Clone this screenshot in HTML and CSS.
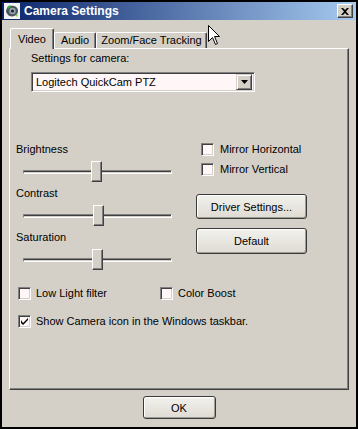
FILE: index.html
```html
<!DOCTYPE html>
<html>
  <head>
    <meta name="viewport" content="width=device-width, initial-scale=1" />
    <link rel="stylesheet" href="styles.css">
  </head>
  <body>
    <div class="window">
      <div class="titlebar">
        <svg class="app-icon" width="16" height="16" viewBox="0 0 16 16">
          <rect x="0" y="0" width="16" height="16" fill="#f4f4f4"/>
          <path d="M2 9 C2 4 6 2 10 3 C14 4 15 8 13 11 C11 14 6 14 4 12 Z" fill="#4a5560"/>
          <circle cx="8.5" cy="8" r="3.2" fill="#9aa4ac"/>
          <circle cx="8.5" cy="8" r="1.6" fill="#1e262c"/>
          <path d="M3 4 L6 2 L7 4 L4 6 Z" fill="#3cae3c"/>
          <path d="M11 12 L14 11 L13 14 Z" fill="#7cc85a"/>
        </svg>
        <span class="title">Camera Settings</span>
        <span class="close-btn">
          <svg width="8" height="7" viewBox="0 0 8 7">
            <path d="M0 0 H2 L4 2 L6 0 H8 L5 3.5 L8 7 H6 L4 5 L2 7 H0 L3 3.5 Z" fill="#000"/>
          </svg>
        </span>
      </div>

      <div class="content">
        <div class="tabs">
          <div class="tab tab-video active">Video</div>
          <div class="tab tab-audio">Audio</div>
          <div class="tab tab-zoom">Zoom/Face Tracking</div>
        </div>

        <div class="panel">
          <div class="camera">
            <div class="camera-label">Settings for camera:</div>
            <div class="combo">
              <span class="combo-text">Logitech QuickCam PTZ</span>
              <span class="combo-btn">
                <svg width="7" height="4" viewBox="0 0 7 4"><path d="M0 0 H7 L3.5 4 Z" fill="#000"/></svg>
              </span>
            </div>
          </div>

          <div class="controls">
            <div class="sliders">
              <div class="slider-label">Brightness</div>
              <div class="slider">
                <div class="track"></div>
                <div class="thumb" style="left: 75px"></div>
              </div>
              <div class="slider-label">Contrast</div>
              <div class="slider">
                <div class="track"></div>
                <div class="thumb" style="left: 77px"></div>
              </div>
              <div class="slider-label">Saturation</div>
              <div class="slider">
                <div class="track"></div>
                <div class="thumb" style="left: 76px"></div>
              </div>
            </div>

            <div class="options">
              <label class="check"><span class="box"></span>Mirror Horizontal</label>
              <label class="check check-second"><span class="box"></span>Mirror Vertical</label>
              <button class="btn btn-driver" type="button">Driver Settings...</button>
              <button class="btn btn-default" type="button">Default</button>
            </div>
          </div>

          <div class="bottom">
            <div class="bottom-row">
              <label class="check check-low"><span class="box"></span>Low Light filter</label>
              <label class="check"><span class="box"></span>Color Boost</label>
            </div>
            <label class="check check-taskbar">
              <span class="box">
                <svg width="7" height="7" viewBox="0 0 7 7"><path d="M0 2 L0 5 L2 7 L7 2 L7 0 L2 5 Z" fill="#000"/></svg>
              </span>Show Camera icon in the Windows taskbar.
            </label>
          </div>
        </div>

        <div class="footer">
          <button class="btn btn-ok" type="button">OK</button>
        </div>
      </div>

      <!-- mouse pointer caught in the screenshot -->
      <svg class="cursor" width="12" height="20" viewBox="0 0 12 20">
        <path d="M0.5 0.5 V16.5 L4.5 12.5 L7.5 19.5 L9.5 18.5 L6.5 11.5 H11.5 Z" fill="#fff" stroke="#000" stroke-width="1"/>
      </svg>
    </div>
  </body>
</html>
```

FILE: styles.css
```css
body {
  margin: 0;
  font-family: "Liberation Sans", Arial, sans-serif;
  font-size: 11px;
  color: #000;
}

.window {
  position: relative;
  width: 358px;
  height: 429px;
  box-sizing: border-box;
  border: 2px solid #000;
  background: #d4d0c8;
  display: flex;
  flex-direction: column;
}

/* title bar */
.titlebar {
  height: 18px;
  display: flex;
  align-items: center;
  background: linear-gradient(to right, #0a246a, #a6caf0);
}

.app-icon {
  margin-left: 2px;
  flex: none;
}

.title {
  margin-left: 4px;
  color: #fff;
  font-weight: bold;
  font-size: 12px;
  flex: 1;
}

.close-btn {
  width: 16px;
  height: 14px;
  margin-right: 3px;
  box-sizing: border-box;
  background: #d4d0c8;
  border-top: 1px solid #fff;
  border-left: 1px solid #fff;
  border-right: 1px solid #404040;
  border-bottom: 1px solid #404040;
  box-shadow: inset -1px -1px #808080;
  display: flex;
  align-items: center;
  justify-content: center;
}

/* tabs */
.content {
  padding: 8px 7px 0 7px;
}

.tabs {
  display: flex;
  align-items: flex-end;
  height: 20px;
  margin-left: 1px;
}

.tab {
  height: 16px;
  box-sizing: border-box;
  padding-top: 1px;
  text-align: center;
  line-height: 13px;
  background: #d4d0c8;
  border-top: 1px solid #fff;
  border-left: 1px solid #fff;
  border-right: 1px solid #404040;
  border-radius: 2px 2px 0 0;
  box-shadow: inset -1px 0 #808080;
}

.tab.active {
  height: 21px;
  margin-bottom: -1px;
  padding-top: 4px;
  position: relative;
  z-index: 1;
}

.tab-video { width: 44px; }
.tab-audio { width: 42px; }
.tab-zoom { width: 111px; }

/* panel */
.panel {
  height: 342px;
  box-sizing: border-box;
  border-top: 1px solid #fff;
  border-left: 1px solid #fff;
  border-right: 1px solid #404040;
  border-bottom: 1px solid #404040;
  box-shadow: inset -1px -1px #808080;
  padding: 3px 0 0 6px;
}

.camera {
  padding-left: 15px;
}

.camera-label {
  line-height: 13px;
}

.combo {
  margin-top: 7px;
  width: 224px;
  height: 20px;
  box-sizing: border-box;
  border-top: 1px solid #808080;
  border-left: 1px solid #808080;
  border-right: 1px solid #fff;
  border-bottom: 1px solid #fff;
  box-shadow: inset 1px 1px #404040, inset -1px -1px #d4d0c8;
  background: #fff7f7;
  display: flex;
  align-items: center;
  padding: 2px;
}

.combo-text {
  flex: 1;
  padding-left: 2px;
}

.combo-btn {
  width: 16px;
  height: 16px;
  box-sizing: border-box;
  background: #d4d0c8;
  border-top: 1px solid #d4d0c8;
  border-left: 1px solid #d4d0c8;
  border-right: 1px solid #404040;
  border-bottom: 1px solid #404040;
  box-shadow: inset 1px 1px #fff, inset -1px -1px #808080;
  display: flex;
  align-items: center;
  justify-content: center;
}

/* sliders and options */
.controls {
  margin-top: 51px;
  display: flex;
}

.sliders {
  width: 180px;
}

.slider-label {
  line-height: 13px;
}

.slider {
  position: relative;
  height: 21px;
  margin: 5px 0;
  display: flex;
  align-items: center;
}

.track {
  margin-left: 7px;
  width: 149px;
  height: 4px;
  box-sizing: border-box;
  border-top: 1px solid #808080;
  border-left: 1px solid #808080;
  border-right: 1px solid #fff;
  border-bottom: 1px solid #fff;
  box-shadow: inset 0 1px #404040;
}

.thumb {
  position: absolute;
  top: 0;
  width: 11px;
  height: 21px;
  box-sizing: border-box;
  background: #d4d0c8;
  border-top: 1px solid #fff;
  border-left: 1px solid #fff;
  border-right: 1px solid #404040;
  border-bottom: 1px solid #404040;
  box-shadow: inset -1px -1px #808080;
}

.options {
  display: flex;
  flex-direction: column;
  align-items: flex-start;
}

.options .check {
  margin-left: 5px;
}

.check-second {
  margin-top: 7px;
}

.check {
  display: flex;
  align-items: center;
  line-height: 13px;
}

.box {
  width: 13px;
  height: 13px;
  box-sizing: border-box;
  margin-right: 6px;
  background: #fff7f7;
  border-top: 1px solid #808080;
  border-left: 1px solid #808080;
  border-right: 1px solid #fff;
  border-bottom: 1px solid #fff;
  box-shadow: inset 1px 1px #404040, inset -1px -1px #d4d0c8;
  display: flex;
  align-items: center;
  justify-content: center;
}

.btn {
  font-family: "Liberation Sans", Arial, sans-serif;
  font-size: 11px;
  color: #000;
  width: 111px;
  height: 25px;
  padding: 0;
  border: 1px solid #3a3a3a;
  border-radius: 3px;
  background: linear-gradient(#f2f1ec, #dedbd3);
  box-shadow: inset 1px 1px #fff, inset -1px -1px #a09d94;
}

.btn-driver {
  margin-top: 18px;
}

.btn-default {
  margin-top: 9px;
  height: 26px;
}

/* bottom checkboxes */
.bottom {
  margin-top: 12px;
  padding-left: 2px;
}

.bottom-row {
  display: flex;
}

.check-low {
  width: 142px;
}

.bottom .box {
  margin-right: 5px;
}

.check-taskbar {
  margin-top: 15px;
}

/* footer */
.footer {
  display: flex;
  justify-content: center;
  padding-top: 6px;
}

.btn-ok {
  width: 73px;
  height: 23px;
}

.cursor {
  position: absolute;
  left: 206px;
  top: 23px;
}
```
